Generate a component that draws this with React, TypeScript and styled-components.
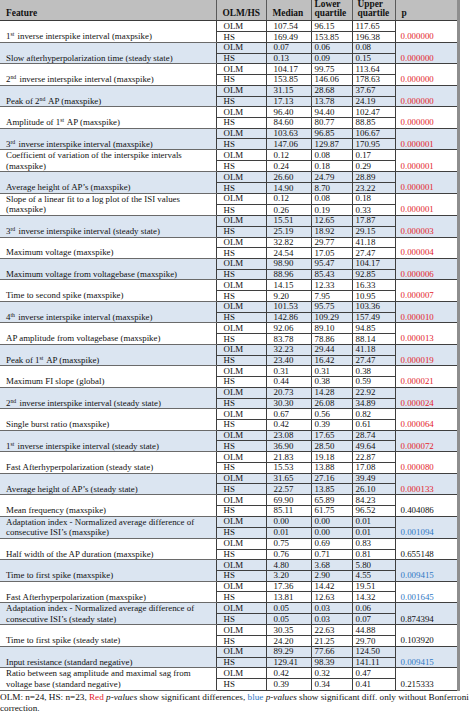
import React from "react";
import styled, { createGlobalStyle } from "styled-components";

const GlobalStyle = createGlobalStyle`
  html, body {
    margin: 0;
    padding: 0;
    background: #ffffff;
  }
  body {
    font-family: "Liberation Serif", "Times New Roman", serif;
    color: #111111;
  }
`;

type Tone = "red" | "blue" | "plain";

interface IFeature {
  label: React.ReactNode;
  olm: string[];
  hs: string[];
  p: string;
  tone: Tone;
}

const Page = styled.div`
  width: 474px;
  overflow: hidden;
  font-family: "Liberation Serif", "Times New Roman", serif;
`;

const Table = styled.table`
  border-collapse: collapse;
  table-layout: fixed;
  width: 458px;
  font-family: "Liberation Serif", "Times New Roman", serif;
  font-size: 8.9px;
  color: #111111;
  border-right: 3px solid #8e8e8e;
`;

const Col = styled.col<{ $w: number }>`
  width: ${(p) => p.$w}px;
`;

const HeadRow = styled.tr`
  height: 20px;
  background: #bfbfbf;
`;

const HeadCell = styled.th<{ $pad: number }>`
  font-weight: bold;
  font-size: 9.4px;
  text-align: left;
  vertical-align: bottom;
  line-height: 9.2px;
  padding: 0 0 2px ${(p) => p.$pad}px;
  border-left: 1px solid #5a5a5a;
  border-bottom: 1px solid #3a3a3a;
  white-space: nowrap;
  &:first-child {
    border-left: none;
  }
`;

const BodyRow = styled.tr<{ $shade: boolean }>`
  height: 10.74px;
  background: ${(p) => (p.$shade ? "#dbe5f1" : "#ffffff")};
`;

const FeatureCell = styled.td`
  vertical-align: bottom;
  line-height: 10.6px;
  padding: 0 4px 0 6px;
  border-bottom: 1px solid #6a6a6a;
  white-space: normal;
`;

const Cell = styled.td<{ $pad: number }>`
  padding: 0 0 0 ${(p) => p.$pad}px;
  line-height: 9px;
  vertical-align: middle;
  border: 1px solid #3f3f3f;
  white-space: nowrap;
  overflow: hidden;
`;

const PCell = styled.td<{ $tone: Tone }>`
  vertical-align: bottom;
  padding: 0 0 0 5px;
  line-height: 10.6px;
  border: 1px solid #3f3f3f;
  white-space: nowrap;
  color: ${(p) =>
    p.$tone === "red" ? "#e3232b" : p.$tone === "blue" ? "#2f78c4" : "#111111"};
`;

const Sup = styled.sup`
  font-size: 5.8px;
  line-height: 0;
  vertical-align: 3px;
  margin-right: 1px;
`;

const Footnote = styled.p`
  margin: 1px 0 0 0;
  font-size: 9.2px;
  line-height: 11px;
  color: #111111;
  white-space: nowrap;
`;

const Red = styled.span`
  color: #e3232b;
`;

const Blue = styled.span`
  color: #2f78c4;
`;

const Em = styled.em`
  font-style: italic;
`;

const ord = (n: string, suf: string, rest: string) => (
  <>
    {n}
    <Sup>{suf}</Sup> {rest}
  </>
);

const features: IFeature[] = [
  { label: ord("1", "st", "inverse interspike interval (maxpsike)"), olm: ["107.54", "96.15", "117.65"], hs: ["169.49", "153.85", "196.38"], p: "0.000000", tone: "red" },
  { label: "Slow afterhyperpolarization time (steady state)", olm: ["0.07", "0.06", "0.08"], hs: ["0.13", "0.09", "0.15"], p: "0.000000", tone: "red" },
  { label: ord("2", "nd", "inverse interspike interval (maxspike)"), olm: ["104.17", "99.75", "113.64"], hs: ["153.85", "146.06", "178.63"], p: "0.000000", tone: "red" },
  { label: <>Peak of 2<Sup>nd</Sup> AP (maxspike)</>, olm: ["31.15", "28.68", "37.67"], hs: ["17.13", "13.78", "24.19"], p: "0.000000", tone: "red" },
  { label: <>Amplitude of 1<Sup>st</Sup> AP (maxspike)</>, olm: ["96.40", "94.40", "102.47"], hs: ["84.60", "80.77", "88.85"], p: "0.000000", tone: "red" },
  { label: ord("3", "rd", "inverse interspike interval (maxspike)"), olm: ["103.63", "96.85", "106.67"], hs: ["147.06", "129.87", "170.95"], p: "0.000001", tone: "red" },
  { label: "Coefficient of variation of the interspike intervals (maxspike)", olm: ["0.12", "0.08", "0.17"], hs: ["0.24", "0.18", "0.29"], p: "0.000001", tone: "red" },
  { label: "Average height of AP’s (maxspike)", olm: ["26.60", "24.79", "28.89"], hs: ["14.90", "8.70", "23.22"], p: "0.000001", tone: "red" },
  { label: "Slope of a linear fit to a log plot of the ISI values (maxspike)", olm: ["0.12", "0.08", "0.18"], hs: ["0.26", "0.19", "0.33"], p: "0.000001", tone: "red" },
  { label: ord("3", "rd", "inverse interspike interval (steady state)"), olm: ["15.51", "12.65", "17.87"], hs: ["25.19", "18.92", "29.15"], p: "0.000003", tone: "red" },
  { label: "Maximum voltage (maxspike)", olm: ["32.82", "29.77", "41.18"], hs: ["24.54", "17.05", "27.47"], p: "0.000004", tone: "red" },
  { label: "Maximum voltage from voltagebase (maxspike)", olm: ["98.90", "95.47", "104.17"], hs: ["88.96", "85.43", "92.85"], p: "0.000006", tone: "red" },
  { label: "Time to second spike (maxspike)", olm: ["14.15", "12.33", "16.33"], hs: ["9.20", "7.95", "10.95"], p: "0.000007", tone: "red" },
  { label: ord("4", "th", "inverse interspike interval (maxspike)"), olm: ["101.53", "95.75", "103.36"], hs: ["142.86", "109.29", "157.49"], p: "0.000010", tone: "red" },
  { label: "AP amplitude from voltagebase (maxspike)", olm: ["92.06", "89.10", "94.85"], hs: ["83.78", "78.86", "88.14"], p: "0.000013", tone: "red" },
  { label: <>Peak of 1<Sup>st</Sup> AP (maxspike)</>, olm: ["32.23", "29.44", "41.18"], hs: ["23.40", "16.42", "27.47"], p: "0.000019", tone: "red" },
  { label: "Maximum FI slope (global)", olm: ["0.31", "0.31", "0.38"], hs: ["0.44", "0.38", "0.59"], p: "0.000021", tone: "red" },
  { label: ord("2", "nd", "inverse interspike interval (steady state)"), olm: ["20.73", "14.28", "22.92"], hs: ["30.30", "26.08", "34.89"], p: "0.000024", tone: "red" },
  { label: "Single burst ratio (maxspike)", olm: ["0.67", "0.56", "0.82"], hs: ["0.42", "0.39", "0.61"], p: "0.000064", tone: "red" },
  { label: ord("1", "st", "inverse interspike interval (steady state)"), olm: ["23.08", "17.65", "28.74"], hs: ["36.90", "28.50", "49.64"], p: "0.000072", tone: "red" },
  { label: "Fast Afterhyperpolarization (steady state)", olm: ["21.83", "19.18", "22.87"], hs: ["15.53", "13.88", "17.08"], p: "0.000080", tone: "red" },
  { label: "Average height of AP’s (steady state)", olm: ["31.65", "27.16", "39.49"], hs: ["22.57", "13.85", "26.10"], p: "0.000133", tone: "red" },
  { label: "Mean frequency (maxspike)", olm: ["69.90", "65.89", "84.23"], hs: ["85.11", "61.75", "96.52"], p: "0.404086", tone: "plain" },
  { label: "Adaptation index - Normalized average difference of consecutive ISI’s (maxspike)", olm: ["0.00", "0.00", "0.01"], hs: ["0.01", "0.00", "0.01"], p: "0.001094", tone: "blue" },
  { label: "Half width of the AP duration (maxspike)", olm: ["0.75", "0.69", "0.83"], hs: ["0.76", "0.71", "0.81"], p: "0.655148", tone: "plain" },
  { label: "Time to first spike (maxspike)", olm: ["4.80", "3.68", "5.80"], hs: ["3.20", "2.90", "4.55"], p: "0.009415", tone: "blue" },
  { label: "Fast Afterhyperpolarization (maxspike)", olm: ["17.36", "14.42", "19.51"], hs: ["13.81", "12.63", "14.32"], p: "0.001645", tone: "blue" },
  { label: "Adaptation index - Normalized average difference of consecutive ISI’s (steady state)", olm: ["0.05", "0.03", "0.06"], hs: ["0.05", "0.03", "0.07"], p: "0.874394", tone: "plain" },
  { label: "Time to first spike (steady state)", olm: ["30.35", "22.63", "44.88"], hs: ["24.20", "21.25", "29.70"], p: "0.103920", tone: "plain" },
  { label: "Input resistance (standard negative)", olm: ["89.29", "77.66", "124.50"], hs: ["129.41", "98.39", "141.11"], p: "0.009415", tone: "blue" },
  { label: "Ratio between sag amplitude and maximal sag from voltage base (standard negative)", olm: ["0.42", "0.32", "0.47"], hs: ["0.39", "0.34", "0.41"], p: "0.215333", tone: "plain" },
];

// left padding of each numeric column
const numPad = [7, 7, 3, 3];

function App() {
  return (
    <Page>
      <GlobalStyle />
      <Table>
        <colgroup>
          <Col $w={216} />
          <Col $w={50} />
          <Col $w={45} />
          <Col $w={41} />
          <Col $w={43} />
          <Col $w={63} />
        </colgroup>
        <thead>
          <HeadRow>
            <HeadCell $pad={6}>Feature</HeadCell>
            <HeadCell $pad={6}>OLM/HS</HeadCell>
            <HeadCell $pad={6}>Median</HeadCell>
            <HeadCell $pad={3}>Lower<br />quartile</HeadCell>
            <HeadCell $pad={5}>Upper<br />quartile</HeadCell>
            <HeadCell $pad={6}>p</HeadCell>
          </HeadRow>
        </thead>
        <tbody>
          {features.map((f, i) => {
            const shade = i % 2 === 1;
            return (
              <React.Fragment key={i}>
                <BodyRow $shade={shade}>
                  <FeatureCell rowSpan={2}>{f.label}</FeatureCell>
                  <Cell $pad={numPad[0]}>OLM</Cell>
                  {f.olm.map((v, j) => (
                    <Cell key={j} $pad={numPad[j + 1]}>{v}</Cell>
                  ))}
                  <PCell rowSpan={2} $tone={f.tone}>{f.p}</PCell>
                </BodyRow>
                <BodyRow $shade={shade}>
                  <Cell $pad={numPad[0]}>HS</Cell>
                  {f.hs.map((v, j) => (
                    <Cell key={j} $pad={numPad[j + 1]}>{v}</Cell>
                  ))}
                </BodyRow>
              </React.Fragment>
            );
          })}
        </tbody>
      </Table>
      <Footnote>
        OLM: n=24, HS: n=23, <Red>Red</Red> <Em>p-values</Em> show significant differences,{" "}
        <Blue>blue</Blue> <Em>p-values</Em> show significant diff. only without Bonferroni
        <br />
        correction.
      </Footnote>
    </Page>
  );
}

export default App;
